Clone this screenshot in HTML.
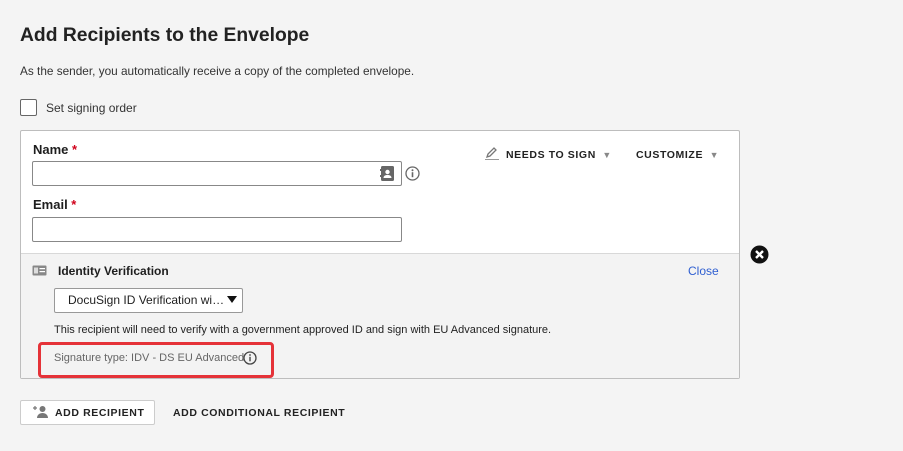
<!DOCTYPE html>
<html><head><meta charset="utf-8"><style>
*{box-sizing:border-box;margin:0;padding:0}
body{width:903px;height:451px;background:#f4f4f4;font-family:"Liberation Sans",Arial,sans-serif;color:#1e1e1e;position:relative;overflow:hidden}
.a{position:absolute}
h1{position:absolute;left:20px;top:25px;font-size:19.3px;font-weight:bold;color:#222}
.card{left:20px;top:130px;width:720px;height:249px;border:1px solid #bdbdbd;background:#fff;border-radius:2px}
.lbl{font-size:13px;font-weight:bold}
.lbl span{color:#d0021b}
.inp{border:1px solid #888;border-radius:2px;background:#fff}
.caps{font-size:10.5px;font-weight:bold;letter-spacing:0.6px;color:#222}
</style></head><body>
<h1>Add Recipients to the Envelope</h1>
<div class="a" style="left:20px;top:64px;font-size:11.8px;color:#333">As the sender, you automatically receive a copy of the completed envelope.</div>
<div class="a" style="left:20px;top:99px;width:17px;height:17px;border:1px solid #666;border-radius:2px;background:#fff"></div>
<div class="a" style="left:46px;top:101px;font-size:12px;color:#333">Set signing order</div>
<div class="a card"></div>
<div class="a" style="left:21px;top:253px;width:718px;height:125px;background:#f3f3f3;border-top:1px solid #d8d8d8"></div>
<div class="a lbl" style="left:33px;top:142px">Name <span>*</span></div>
<div class="a inp" style="left:32px;top:161px;width:370px;height:25px"></div>
<svg class="a" style="left:380px;top:166px" width="15" height="15" viewBox="0 0 15 15"><rect x="1" y="0" width="13" height="15" rx="1.5" fill="#666"/><rect x="0" y="3" width="2" height="2" fill="#666"/><rect x="0" y="9" width="2" height="2" fill="#666"/><circle cx="7.5" cy="6" r="2.2" fill="#fff"/><path d="M3.5 12c0-2.2 1.8-3 4-3s4 .8 4 3z" fill="#fff"/></svg>
<svg class="a" style="left:405px;top:166px" width="15" height="15" viewBox="0 0 15 15"><circle cx="7.5" cy="7.5" r="6.5" fill="none" stroke="#666" stroke-width="1.3"/><circle cx="7.5" cy="4.3" r="1" fill="#666"/><rect x="6.7" y="6.2" width="1.6" height="5" fill="#666"/></svg>
<div class="a lbl" style="left:33px;top:197px">Email <span>*</span></div>
<div class="a inp" style="left:32px;top:217px;width:370px;height:25px"></div>
<svg class="a" style="left:485px;top:146px" width="14" height="14" viewBox="0 0 14 14"><path d="M2 11l1-3 6-6 2 2-6 6z" fill="none" stroke="#777" stroke-width="1.3"/><path d="M0 13.5h14" stroke="#999" stroke-width="1"/></svg>
<div class="a caps" style="left:506px;top:149px">NEEDS TO SIGN <span style="color:#888;font-size:9px;margin-left:3px">▼</span></div>
<div class="a caps" style="left:636px;top:149px">CUSTOMIZE <span style="color:#888;font-size:9px;margin-left:3px">▼</span></div>
<svg class="a" style="left:750px;top:245px" width="19" height="19" viewBox="0 0 19 19"><circle cx="9.5" cy="9.5" r="9" fill="#111"/><path d="M6 6l7 7M13 6l-7 7" stroke="#fff" stroke-width="2.4"/></svg>
<svg class="a" style="left:32px;top:265px" width="15" height="11" viewBox="0 0 15 11"><rect x="0.5" y="0.5" width="14" height="10" rx="1" fill="#888"/><rect x="2" y="2.5" width="4" height="6" fill="#ddd"/><rect x="7.5" y="3" width="5.5" height="1.2" fill="#fff"/><rect x="7.5" y="6" width="5.5" height="1.2" fill="#fff"/></svg>
<div class="a lbl" style="left:58px;top:264px;font-size:12px">Identity Verification</div>
<div class="a" style="left:688px;top:264px;font-size:12px;color:#2f5fd1">Close</div>
<div class="a inp" style="left:54px;top:288px;width:189px;height:25px;border-color:#999"></div>
<div class="a" style="left:68px;top:293px;font-size:12px">DocuSign ID Verification wi…</div>
<svg class="a" style="left:227px;top:296px" width="10" height="7" viewBox="0 0 10 7"><path d="M0 0h10L5 7z" fill="#111"/></svg>
<div class="a" style="left:54px;top:324px;font-size:11px;color:#222">This recipient will need to verify with a government approved ID and sign with EU Advanced signature.</div>
<div class="a" style="left:38px;top:342px;width:236px;height:36px;border:3px solid #e53238;border-radius:4px"></div>
<div class="a" style="left:54px;top:352px;font-size:11px;color:#666">Signature type: IDV - DS EU Advanced</div>
<svg class="a" style="left:243px;top:351px" width="14" height="14" viewBox="0 0 14 14"><circle cx="7" cy="7" r="6" fill="none" stroke="#444" stroke-width="1.3"/><circle cx="7" cy="4" r="0.9" fill="#444"/><rect x="6.3" y="5.8" width="1.4" height="4.5" fill="#444"/></svg>
<div class="a" style="left:20px;top:400px;width:135px;height:25px;border:1px solid #ccc;background:#fff;border-radius:2px"></div>
<svg class="a" style="left:33px;top:405px" width="16" height="13" viewBox="0 0 16 13"><path d="M2 1v4M0 3h4" stroke="#777" stroke-width="1.2"/><circle cx="9.5" cy="4" r="3" fill="#777"/><path d="M4 13c0-3 2.5-5 5.5-5s5.5 2 5.5 5z" fill="#777"/></svg>
<div class="a caps" style="left:55px;top:407px">ADD RECIPIENT</div>
<div class="a caps" style="left:173px;top:407px">ADD CONDITIONAL RECIPIENT</div>
</body></html>
